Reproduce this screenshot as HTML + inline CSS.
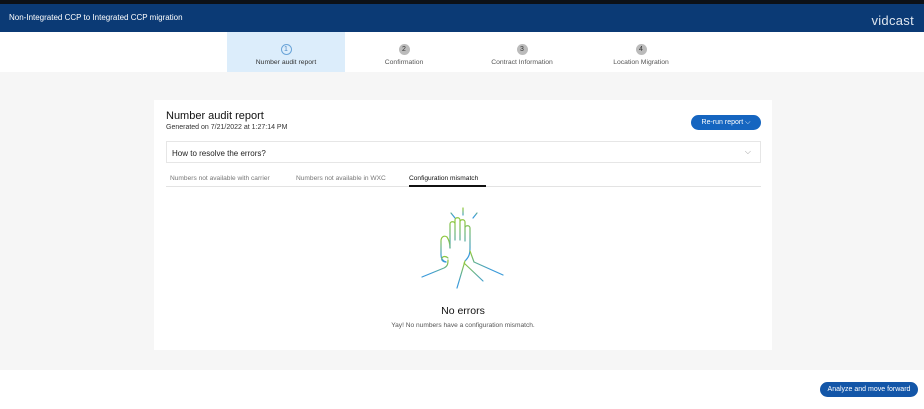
<!DOCTYPE html>
<html><head><style>
*{margin:0;padding:0;box-sizing:border-box}
body{width:924px;height:409px;overflow:hidden;background:#fff;font-family:"Liberation Sans",sans-serif;position:relative}
.top{position:absolute;left:0;top:0;width:924px;height:4px;background:#0d1117}
.hdr{position:absolute;left:0;top:4px;width:924px;height:28px;background:#0b3a75;color:#fff}
.hdr .t{position:absolute;left:9px;top:9px;font-size:8px}
.hdr .v{position:absolute;right:10px;top:9px;font-size:13px;color:#dfe6ef;letter-spacing:0.3px}
.steps{position:absolute;top:32px;left:0;width:924px;height:40px;background:#fff}
.step{position:absolute;top:0;height:40px;width:118px;text-align:center;font-size:6.8px;color:#555}
.step .c{width:11px;height:11px;border-radius:50%;background:#bbb;color:#333;font-size:7px;line-height:11px;margin:12px auto 4px}
.gray{position:absolute;top:72px;left:0;width:924px;height:298px;background:#f6f6f6}
.card{position:absolute;left:154px;top:100px;width:618px;height:250px;background:#fff}
.btn{position:absolute;background:#1565c0;color:#fff;border-radius:8px;font-size:7px;text-align:center}
.tab{position:absolute;top:75px;font-size:6.6px;color:#777;white-space:nowrap}
</style></head><body>
<div class="top"></div>
<div class="hdr"><div class="t">Non-Integrated CCP to Integrated CCP migration</div><div class="v">vidcast</div></div>
<div class="steps">
<div class="step" style="left:227px;background:#dcedfb;color:#333"><div class="c" style="background:none;border:1px solid #6aa4d8;color:#4a87c4;line-height:9px">1</div>Number audit report</div>
<div class="step" style="left:345px"><div class="c">2</div>Confirmation</div>
<div class="step" style="left:463px"><div class="c">3</div>Contract Information</div>
<div class="step" style="left:582px"><div class="c">4</div>Location Migration</div>
</div>
<div class="gray"></div>
<div class="card">
<div style="position:absolute;left:12px;top:10px;font-size:11px;color:#111">Number audit report</div>
<div style="position:absolute;left:12px;top:24px;font-size:7px;color:#333">Generated on 7/21/2022 at 1:27:14 PM</div>
<div class="btn" style="left:537px;top:15px;width:70px;height:15px;line-height:15px">Re-run report ⌵</div>
<div style="position:absolute;left:12px;top:41px;width:595px;height:22px;border:1px solid #e6e6e6;font-size:8px;color:#222;padding:7px 5px">How to resolve the errors?<span style="position:absolute;right:9px;top:5px;color:#999">⌵</span></div>
<div style="position:absolute;left:12px;top:86px;width:595px;height:1px;background:#e3e3e3"></div>
<div class="tab" style="left:16px">Numbers not available with carrier</div>
<div class="tab" style="left:142px">Numbers not available in WXC</div>
<div class="tab" style="left:255px;color:#111">Configuration mismatch</div>
<div style="position:absolute;left:255px;top:85px;width:77px;height:2px;background:#111"></div>
<svg style="position:absolute;left:266px;top:105px" width="90" height="90" viewBox="0 0 90 90">
<defs><linearGradient id="g" x1="0" y1="0" x2="0" y2="1"><stop offset="0.1" stop-color="#8cc63f"/><stop offset="0.8" stop-color="#3a9ad9"/></linearGradient></defs>
<g fill="none" stroke="url(#g)" stroke-width="1.2" stroke-linecap="round" stroke-linejoin="round">
<path d="M43 3v7M31 8l4 5M57 8l-4 5"/>
<path d="M30 43V19c0-3 5-3 5 0v16M35 30V15c0-3 5-3 5 0v20M40 32V17c0-3 5-3 5 0v19M45 34V23c0-3 5-3 5 0v20c0 6-1 9-5 13"/>
<path d="M30 43c0-4-1-8-3-11M27 32c-3-2-6 0-6 4v14c0 4 2 6 5 7"/>
<path d="M26 57c-3 0-5-2-4-4s4-2 6 0"/>
<path d="M2 72l22-9c4-2 4-5 4-8"/>
<path d="M50 46l4 11 29 13"/>
<path d="M45 56l-8 27M44 58l19 18"/>
</g></svg>
<div style="position:absolute;left:0;width:618px;top:205px;text-align:center;font-size:10.5px;color:#111">No errors</div>
<div style="position:absolute;left:0;width:618px;top:222px;text-align:center;font-size:6.6px;color:#555">Yay! No numbers have a configuration mismatch.</div>
</div>
<div class="btn" style="left:820px;top:382px;width:98px;height:15px;line-height:15px;background:#1356a8">Analyze and move forward</div>
</body></html>
